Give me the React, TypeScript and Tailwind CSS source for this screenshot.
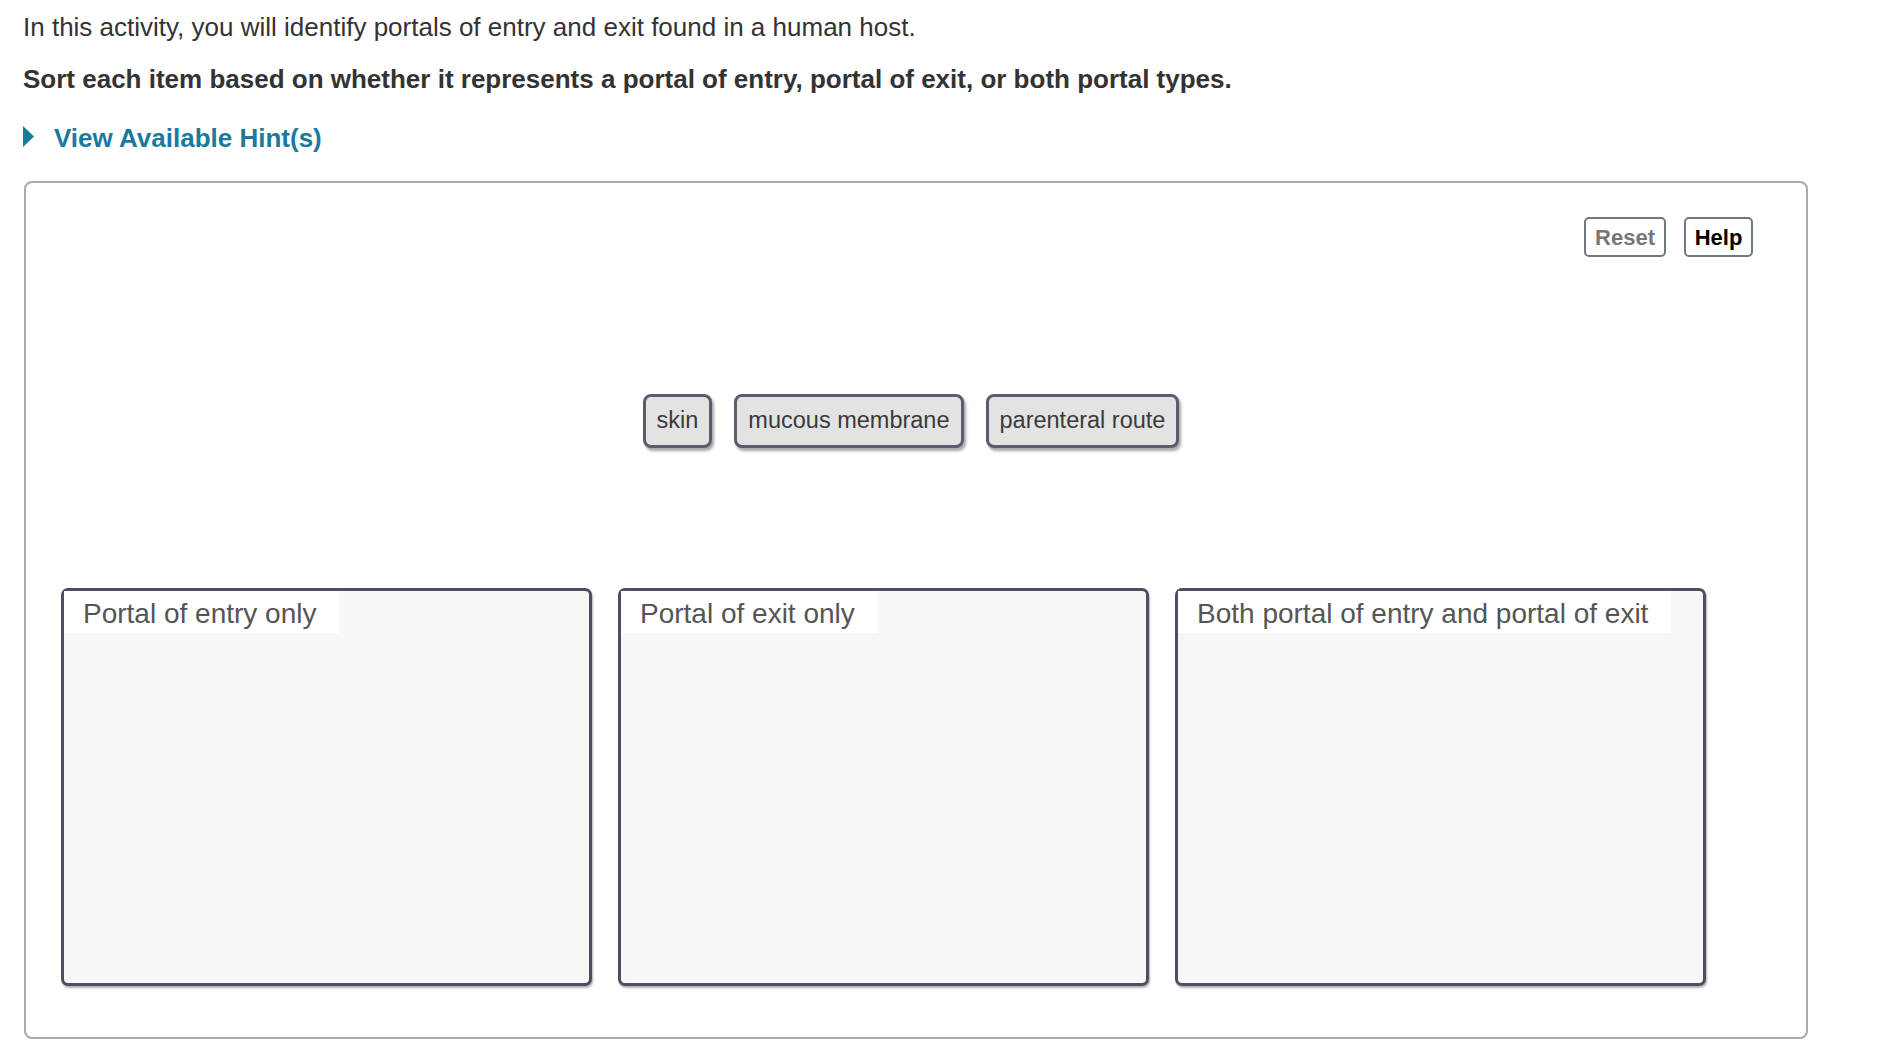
export default function App() {
  const chips = ["skin", "mucous membrane", "parenteral route"];
  const zones = [
    "Portal of entry only",
    "Portal of exit only",
    "Both portal of entry and portal of exit",
  ];
  return (
    <div className="min-h-screen bg-white pl-[23px] pt-[12px] font-['Liberation_Sans',Arial,sans-serif]">
      <p className="text-[26px] leading-[30px] text-[#333333]">
        In this activity, you will identify portals of entry and exit found in a human host.
      </p>
      <p className="mt-[22px] text-[26px] leading-[30px] font-bold text-[#333333]">
        Sort each item based on whether it represents a portal of entry, portal of exit, or both portal types.
      </p>
      <div className="mt-[29px] flex items-center h-[30px]">
        <svg width="12" height="21" viewBox="0 0 12 21" className="shrink-0 -mt-[4px]">
          <polygon points="0,0 11,10.5 0,21" fill="#1a7a9c" />
        </svg>
        <span className="ml-[19px] text-[26px] leading-[30px] font-bold text-[#1a7a9c]">
          View Available Hint(s)
        </span>
      </div>
      <div className="mt-[28px] ml-[1px] w-[1784px] border-2 border-[#aaaaaa] rounded-[8px] bg-white pb-[51px]">
        <div className="flex justify-end gap-[18px] pr-[53px] pt-[34px]">
          <button className="h-[40px] w-[82px] border-2 border-[#6e7980] rounded-[5px] text-[22px] font-bold text-[#777777] bg-white">
            Reset
          </button>
          <button className="h-[40px] w-[69px] border-2 border-[#6e7980] rounded-[5px] text-[22px] font-bold text-black bg-white">
            Help
          </button>
        </div>
        <div className="mt-[137px] flex justify-center gap-[22px] pr-[10px]">
          {chips.map((c) => (
            <div
              key={c}
              className="h-[54px] px-[11px] flex items-center border-[3px] border-[#5c5c6e] rounded-[8px] bg-[#e3e3e3] text-[23.5px] text-[#3a3a3a] shadow-[2px_3px_3px_rgba(0,0,0,0.35)]"
            >
              {c}
            </div>
          ))}
        </div>
        <div className="mt-[140px] flex gap-[26px] pl-[35px]">
          {zones.map((z) => (
            <div
              key={z}
              className="w-[531px] h-[398px] border-[3px] border-[#4e4e61] rounded-[7px] bg-[#f7f7f7] shadow-[1px_2px_2px_rgba(0,0,0,0.3)]"
            >
              <div className="inline-block bg-white pl-[19px] pr-[23px] pt-[4px] h-[42px] leading-[38px] text-[28px] text-[#555555]">
                {z}
              </div>
            </div>
          ))}
        </div>
      </div>
    </div>
  );
}
